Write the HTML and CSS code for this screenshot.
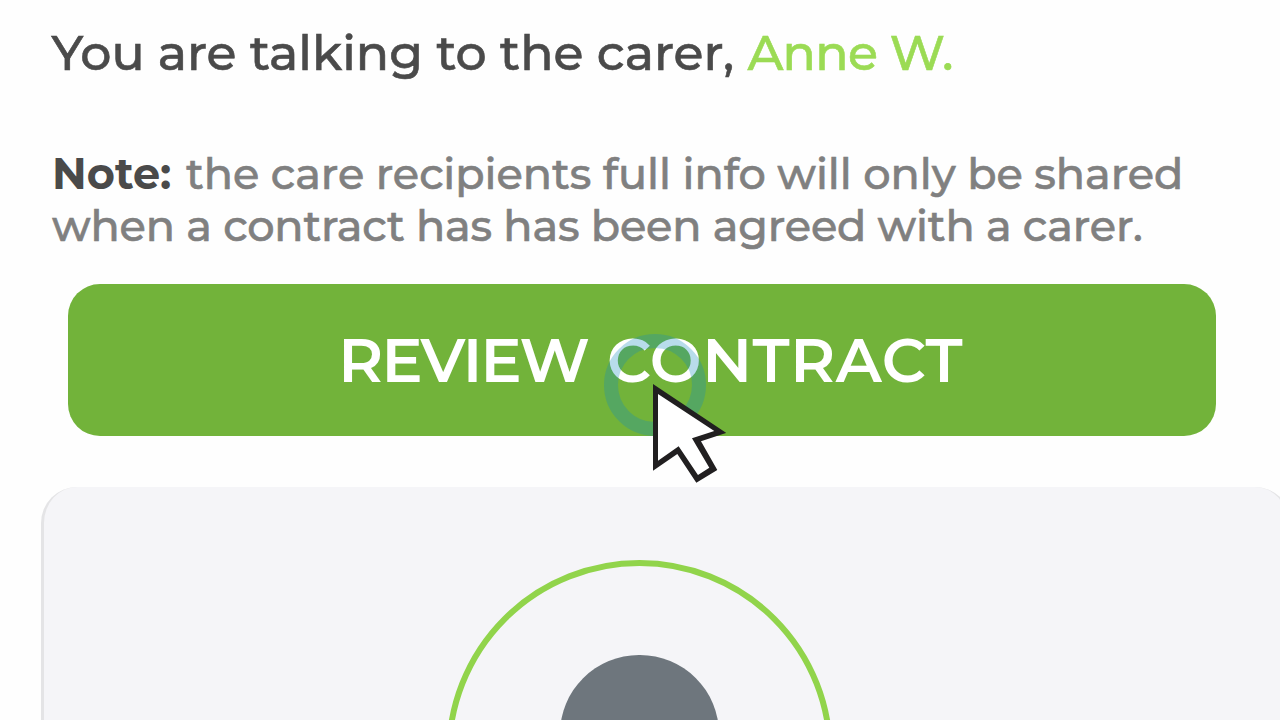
FILE: index.html
```html
<!DOCTYPE html>
<html lang="en">
<head>
<meta charset="utf-8">
<title>Review contract</title>
<link rel="stylesheet" href="styles.css">
</head>
<body>
<main class="page">
  <h1 class="heading"><span class="heading-text">You are talking to the carer,</span> <span class="carer">Anne W.</span></h1>
  <p class="note"><strong class="label">Note:</strong> <span class="line-one">the care recipients full info will only be shared</span><br><span class="line-two">when a contract has has been agreed with a carer.</span></p>
  <button class="review"><span class="review-verb">REVIEW</span> <span class="review-noun">CONTRACT</span></button>
  <section class="profile"><div class="avatar"><div class="head"></div></div></section>
  <div class="click-ring"></div>
  <svg class="cursor" viewBox="0 0 220 296">
    <path fill="#211f20" d="M0 0L220 147L144 172L193 258L130 296L73 210L0 260Z"/>
    <path fill="#fff" d="M15 30L184 141L117 163L169 251L135 273L77 187L15 230Z"/>
  </svg>
</main>
</body>
</html>
```
FILE: styles.css
```css
* { box-sizing: border-box; }
body { margin: 0; background: #fefefe; }
.page {
  position: relative;
  width: 1280px;
  height: 720px;
  overflow: hidden;
  display: flex;
  flex-direction: column;
  font-family: Montserrat, Inter, sans-serif;
}
.heading {
  margin: 23px 0 0 51.5px;
  height: 60px;
  font-size: 49px;
  line-height: 60px;
  font-weight: 500;
  -webkit-text-stroke: 0.6px currentColor;
  color: #4a4a4a;
  white-space: nowrap;
}
.carer { color: #9bdb54; letter-spacing: -0.7px; }
.note {
  margin: 65px 0 0 52px;
  height: 104px;
  font-size: 43px;
  line-height: 52px;
  font-weight: 500;
  color: #808080;
  white-space: nowrap;
}
.label { font-weight: 700; color: #4a4a4a; margin-right: 3px; }
.line-one, .line-two { -webkit-text-stroke: 0.6px currentColor; }
.line-one { letter-spacing: -0.04px; }
.line-two { letter-spacing: -0.17px; }
.review {
  margin: 31.5px 0 0 68px;
  width: 1147.5px;
  height: 152px;
  flex: none;
  padding: 0 0 0 18px;
  border: 0;
  border-radius: 32px;
  background: #72b33a;
  color: #fff;
  font-family: inherit;
  font-size: 61.5px;
  font-weight: 600;
  line-height: 72px;
}
.review-verb { letter-spacing: -1.7px; margin-right: 2px; }
.review-noun { letter-spacing: 0.6px; }
.profile {
  margin: 51px 0 0 40.5px;
  width: 1250.5px;
  height: 600px;
  flex: none;
  padding: 73.5px 0 0 405.5px;
  border: solid #e4e4e6;
  border-width: 0 3px;
  border-radius: 36px;
  background: #f5f5f8;
}
.avatar {
  width: 387px;
  height: 387px;
  border: 6px solid #91d44b;
  border-radius: 50%;
  display: flex;
  justify-content: center;
  padding-top: 88.5px;
  margin-left: -3px;
}
.head {
  width: 158.5px;
  height: 158.5px;
  border-radius: 50%;
  background: #6e767d;
}
.click-ring {
  position: absolute;
  left: 603.5px;
  top: 334px;
  width: 102px;
  height: 102px;
  border: 14px solid rgba(20, 140, 190, 0.3);
  border-radius: 50%;
}
.cursor {
  position: absolute;
  left: 653px;
  top: 384px;
  width: 73.3px;
  height: 98.7px;
}
```
